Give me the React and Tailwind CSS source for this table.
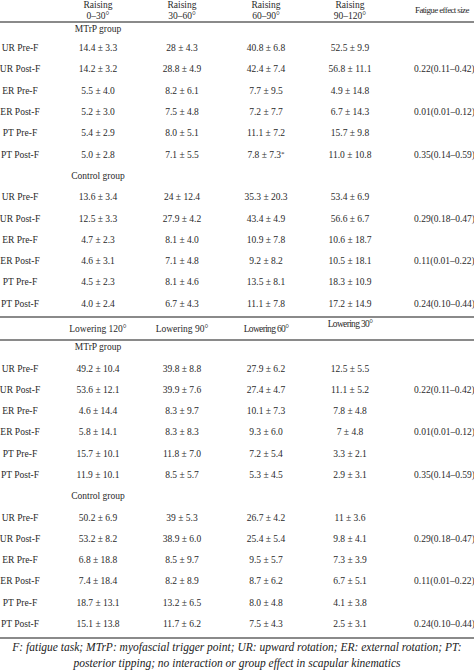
const raising = {
  mtrp: [
    ["UR Pre-F", "14.4 ± 3.3", "28 ± 4.3", "40.8 ± 6.8", "52.5 ± 9.9", ""],
    ["UR Post-F", "14.2 ± 3.2", "28.8 ± 4.9", "42.4 ± 7.4", "56.8 ± 11.1", "0.22(0.11–0.42)"],
    ["ER Pre-F", "5.5 ± 4.0", "8.2 ± 6.1", "7.7 ± 9.5", "4.9 ± 14.8", ""],
    ["ER Post-F", "5.2 ± 3.0", "7.5 ± 4.8", "7.2 ± 7.7", "6.7 ± 14.3", "0.01(0.01–0.12)"],
    ["PT Pre-F", "5.4 ± 2.9", "8.0 ± 5.1", "11.1 ± 7.2", "15.7 ± 9.8", ""],
    ["PT Post-F", "5.0 ± 2.8", "7.1 ± 5.5", "7.8 ± 7.3*", "11.0 ± 10.8", "0.35(0.14–0.59)"],
  ],
  control: [
    ["UR Pre-F", "13.6 ± 3.4", "24 ± 12.4", "35.3 ± 20.3", "53.4 ± 6.9", ""],
    ["UR Post-F", "12.5 ± 3.3", "27.9 ± 4.2", "43.4 ± 4.9", "56.6 ± 6.7", "0.29(0.18–0.47)"],
    ["ER Pre-F", "4.7 ± 2.3", "8.1 ± 4.0", "10.9 ± 7.8", "10.6 ± 18.7", ""],
    ["ER Post-F", "4.6 ± 3.1", "7.1 ± 4.8", "9.2 ± 8.2", "10.5 ± 18.1", "0.11(0.01–0.22)"],
    ["PT Pre-F", "4.5 ± 2.3", "8.1 ± 4.6", "13.5 ± 8.1", "18.3 ± 10.9", ""],
    ["PT Post-F", "4.0 ± 2.4", "6.7 ± 4.3", "11.1 ± 7.8", "17.2 ± 14.9", "0.24(0.10–0.44)"],
  ],
};

const lowering = {
  mtrp: [
    ["UR Pre-F", "49.2 ± 10.4", "39.8 ± 8.8", "27.9 ± 6.2", "12.5 ± 5.5", ""],
    ["UR Post-F", "53.6 ± 12.1", "39.9 ± 7.6", "27.4 ± 4.7", "11.1 ± 5.2", "0.22(0.11–0.42)"],
    ["ER Pre-F", "4.6 ± 14.4", "8.3 ± 9.7", "10.1 ± 7.3", "7.8 ± 4.8", ""],
    ["ER Post-F", "5.8 ± 14.1", "8.3 ± 8.3", "9.3 ± 6.0", "7 ± 4.8", "0.01(0.01–0.12)"],
    ["PT Pre-F", "15.7 ± 10.1", "11.8 ± 7.0", "7.2 ± 5.4", "3.3 ± 2.1", ""],
    ["PT Post-F", "11.9 ± 10.1", "8.5 ± 5.7", "5.3 ± 4.5", "2.9 ± 3.1", "0.35(0.14–0.59)"],
  ],
  control: [
    ["UR Pre-F", "50.2 ± 6.9", "39 ± 5.3", "26.7 ± 4.2", "11 ± 3.6", ""],
    ["UR Post-F", "53.2 ± 8.2", "38.9 ± 6.0", "25.4 ± 5.4", "9.8 ± 4.1", "0.29(0.18–0.47)"],
    ["ER Pre-F", "6.8 ± 18.8", "8.5 ± 9.7", "9.5 ± 5.7", "7.3 ± 3.9", ""],
    ["ER Post-F", "7.4 ± 18.4", "8.2 ± 8.9", "8.7 ± 6.2", "6.7 ± 5.1", "0.11(0.01–0.22)"],
    ["PT Pre-F", "18.7 ± 13.1", "13.2 ± 6.5", "8.0 ± 4.8", "4.1 ± 3.8", ""],
    ["PT Post-F", "15.1 ± 13.8", "11.7 ± 6.2", "7.5 ± 4.3", "2.5 ± 3.1", "0.24(0.10–0.44)"],
  ],
};

const grid = "grid grid-cols-[56px_84px_84px_84px_84px_1fr]";

function Cell({ children }) {
  return (
    <div className="flex justify-center items-center whitespace-nowrap">
      {children}
    </div>
  );
}

function Value({ text }) {
  if (text.endsWith("*")) {
    return (
      <span>
        {text.slice(0, -1)}
        <span className="text-[7px] align-[2px]">*</span>
      </span>
    );
  }
  return <span>{text}</span>;
}

function DataRow({ row }) {
  const [label, a, b, c, d, es] = row;
  return (
    <div className={`${grid} h-[21.3px]`}>
      <div className="flex justify-center items-center whitespace-nowrap pr-[16px]">
        {label}
      </div>
      <Cell><Value text={a} /></Cell>
      <Cell><Value text={b} /></Cell>
      <Cell><Value text={c} /></Cell>
      <Cell><Value text={d} /></Cell>
      <div className="flex items-center whitespace-nowrap pl-[22px]">{es}</div>
    </div>
  );
}

function GroupRow({ title, className }) {
  return (
    <div className={`${grid} ${className}`}>
      <div />
      <Cell>{title}</Cell>
    </div>
  );
}

function Block({ data, first }) {
  return (
    <div>
      <GroupRow
        title="MTrP group"
        className={first ? "h-[14.5px] items-start" : "h-[16.5px] items-start"}
      />
      {data.mtrp.map((r) => (
        <DataRow key={"m" + r[0]} row={r} />
      ))}
      <GroupRow title="Control group" className="h-[21.3px] items-center" />
      {data.control.map((r) => (
        <DataRow key={"c" + r[0]} row={r} />
      ))}
    </div>
  );
}

export default function App() {
  return (
    <div
      className="w-[474px] h-[670px] overflow-hidden bg-white text-[#2a2a2a] text-[9.5px] leading-[12px]"
      style={{ fontFamily: '"Liberation Serif", "Times New Roman", serif' }}
    >
      {/* header: raising */}
      <div className={`${grid} h-[21px] items-center pb-[1px]`}>
        <div />
        {["0–30°", "30–60°", "60–90°", "90–120°"].map((r) => (
          <div key={r} className="flex flex-col items-center leading-[11px]">
            <span>Raising</span>
            <span>{r}</span>
          </div>
        ))}
        <div className="pl-[23px] whitespace-nowrap text-[9px] tracking-[-0.07em] pb-[2px]">
          Fatigue effect size
        </div>
      </div>
      <div className="h-[2px] bg-[#8a8a8a]" />

      <Block data={raising} first />

      <div className="h-[2px] bg-[#8a8a8a] mt-[2px]" />
      {/* header: lowering */}
      <div className={`${grid} h-[21px] items-center`}>
        <div />
        <Cell>Lowering 120°</Cell>
        <Cell>Lowering 90°</Cell>
        <Cell>
          <span className="tracking-[-0.07em]">Lowering 60°</span>
        </Cell>
        <div className="flex justify-center pb-[10px]">
          <span className="tracking-[-0.07em] whitespace-nowrap">Lowering 30°</span>
        </div>
      </div>
      <div className="h-[2px] bg-[#8a8a8a]" />

      <Block data={lowering} />

      <div className="h-[2px] bg-[#8a8a8a] mt-[2px]" />
      <p className="text-center italic text-[11.5px] leading-[16px] whitespace-nowrap text-[#222]">
        F: fatigue task; MTrP: myofascial trigger point; UR: upward rotation; ER: external rotation; PT:
        <br />
        posterior tipping; no interaction or group effect in scapular kinematics
      </p>
    </div>
  );
}
